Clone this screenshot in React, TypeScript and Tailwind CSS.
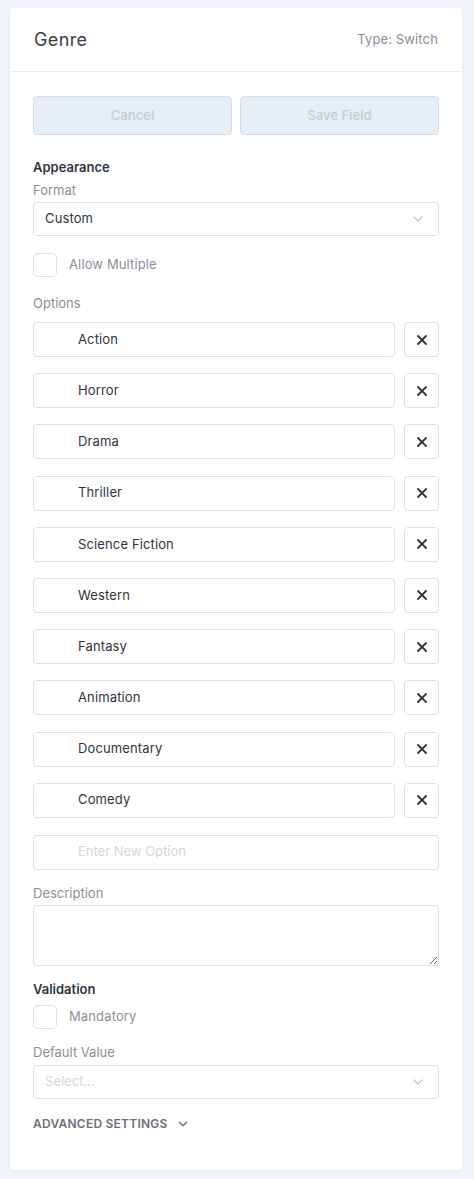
import { ChevronDown, X } from 'lucide-react';

const options = [
  'Action',
  'Horror',
  'Drama',
  'Thriller',
  'Science Fiction',
  'Western',
  'Fantasy',
  'Animation',
  'Documentary',
  'Comedy',
];

function Checkbox({ label }: { label: string }) {
  return (
    <label className="flex items-center gap-3">
      <span className="h-6 w-6 rounded-[5px] border border-[#dce1e7] bg-white" />
      <span className="text-[13px] tracking-[0.01em] text-[#8a9099]">{label}</span>
    </label>
  );
}

function SelectBox({ value, placeholder }: { value?: string; placeholder?: string }) {
  return (
    <div className="flex h-[34px] items-center justify-between rounded-[4px] border border-[#dce1e7] bg-white pl-[11px] pr-[12px]">
      <span className={value ? 'text-[13px] tracking-[0.01em] text-[#2f3640]' : 'text-[13px] text-[#d3d8de]'}>
        {value ?? placeholder}
      </span>
      <ChevronDown className="h-4 w-4 text-[#c3c9d0]" strokeWidth={2} />
    </div>
  );
}

export default function App() {
  return (
    <div
      className="min-h-[1179px] bg-[#f1f4f8] pl-[10px] pr-[12px] pt-2"
      style={{ fontFamily: 'Inter, "Noto Sans", sans-serif' }}
    >
      <div className="rounded-[4px] bg-white shadow-[0_1px_4px_rgba(0,0,0,0.06)]">
        {/* header */}
        <div className="flex h-[64px] items-center justify-between border-b border-[#e8ebef] pl-[24px] pr-[24px]">
          <h2 className="text-[18px] tracking-[0.02em] text-[#3a3f47]">Genre</h2>
          <span className="text-[13px] tracking-[0.01em] text-[#8a9099]">Type: Switch</span>
        </div>

        <div className="px-[23px] pb-[37px] pt-[24px]">
          <div className="grid grid-cols-2 gap-2">
            <button className="h-[39px] rounded-[4px] border border-[#d7dee7] bg-[#e8eef5] text-[13px] font-semibold text-[#c7d0da]">
              Cancel
            </button>
            <button className="h-[39px] rounded-[4px] border border-[#d7dee7] bg-[#e8eef5] text-[13px] font-semibold text-[#c7d0da]">
              Save Field
            </button>
          </div>

          <h3 className="mt-[23px] text-[13px] font-semibold leading-[18px] text-[#2f3640]">Appearance</h3>
          <p className="mt-[5px] text-[13px] leading-[18px] text-[#8a9099]">Format</p>
          <div className="mt-[3px]">
            <SelectBox value="Custom" />
          </div>

          <div className="mt-[17px]">
            <Checkbox label="Allow Multiple" />
          </div>

          <p className="mt-[17px] text-[13px] leading-[18px] text-[#8a9099]">Options</p>
          <div className="mt-[10px] flex flex-col gap-[16.2px]">
            {options.map((o) => (
              <div key={o} className="flex gap-[9px]">
                <div className="flex h-[35px] flex-1 items-center rounded-[4px] border border-[#dce1e7] bg-white pl-[44px] text-[13px] tracking-[0.01em] text-[#2f3640]">
                  {o}
                </div>
                <button className="flex h-[35px] w-[35px] items-center justify-center rounded-[4px] border border-[#dce1e7] bg-white">
                  <X className="h-4 w-4 text-[#2f3640]" strokeWidth={2.75} />
                </button>
              </div>
            ))}
          </div>

          <div className="mt-[17px] flex h-[35px] items-center rounded-[4px] border border-[#dce1e7] bg-white pl-[44px] text-[13px] text-[#d3d8de]">
            Enter New Option
          </div>

          <p className="mt-[14px] text-[13px] leading-[18px] text-[#8a9099]">Description</p>
          <textarea className="mt-[3px] block h-[61px] w-full rounded-[4px] border border-[#dce1e7] bg-white" />

          <h3 className="mt-[14px] text-[13px] font-semibold leading-[18px] text-[#2f3640]">Validation</h3>
          <div className="mt-[7px]">
            <Checkbox label="Mandatory" />
          </div>

          <p className="mt-[14px] text-[13px] leading-[18px] text-[#8a9099]">Default Value</p>
          <div className="mt-[4px]">
            <SelectBox placeholder="Select..." />
          </div>

          <button className="mt-[16px] flex items-center gap-[8px] text-[12px] font-semibold tracking-[0.02em] text-[#6b717a]">
            ADVANCED SETTINGS
            <ChevronDown className="h-[14px] w-[14px] text-[#6b717a]" strokeWidth={2.5} />
          </button>
        </div>
      </div>
    </div>
  );
}
